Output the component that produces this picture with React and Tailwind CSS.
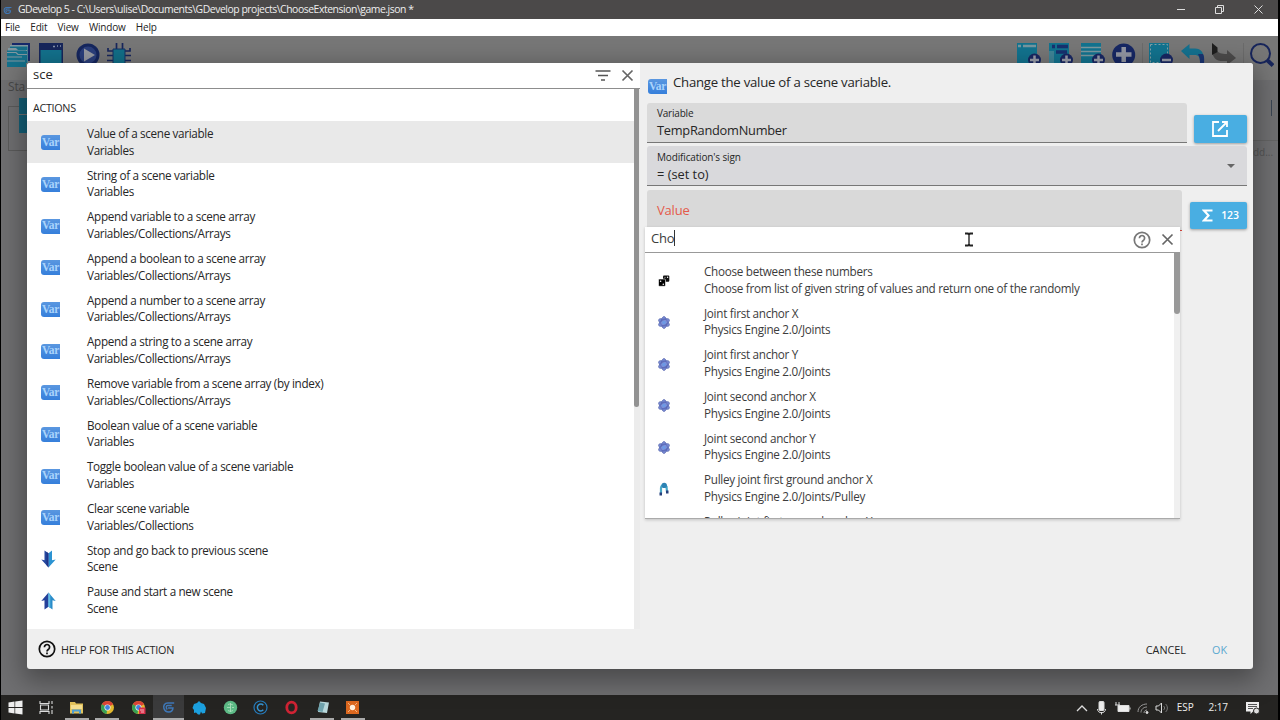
import React from 'react';

const actions = [
    { name: 'Value of a scene variable', group: 'Variables', icon: 'var' },
    { name: 'String of a scene variable', group: 'Variables', icon: 'var' },
    { name: 'Append variable to a scene array', group: 'Variables/Collections/Arrays', icon: 'var' },
    { name: 'Append a boolean to a scene array', group: 'Variables/Collections/Arrays', icon: 'var' },
    { name: 'Append a number to a scene array', group: 'Variables/Collections/Arrays', icon: 'var' },
    { name: 'Append a string to a scene array', group: 'Variables/Collections/Arrays', icon: 'var' },
    { name: 'Remove variable from a scene array (by index)', group: 'Variables/Collections/Arrays', icon: 'var' },
    { name: 'Boolean value of a scene variable', group: 'Variables', icon: 'var' },
    { name: 'Toggle boolean value of a scene variable', group: 'Variables', icon: 'var' },
    { name: 'Clear scene variable', group: 'Variables/Collections', icon: 'var' },
    { name: 'Stop and go back to previous scene', group: 'Scene', icon: 'down' },
    { name: 'Pause and start a new scene', group: 'Scene', icon: 'up' },
];

const expressions = [
    { name: 'Choose between these numbers', group: 'Choose from list of given string of values and return one of the randomly', icon: 'dice' },
    { name: 'Joint first anchor X', group: 'Physics Engine 2.0/Joints', icon: 'physics' },
    { name: 'Joint first anchor Y', group: 'Physics Engine 2.0/Joints', icon: 'physics' },
    { name: 'Joint second anchor X', group: 'Physics Engine 2.0/Joints', icon: 'physics' },
    { name: 'Joint second anchor Y', group: 'Physics Engine 2.0/Joints', icon: 'physics' },
    { name: 'Pulley joint first ground anchor X', group: 'Physics Engine 2.0/Joints/Pulley', icon: 'pulley' },
    { name: 'Pulley joint first ground anchor Y', group: '', icon: 'pulley' },
];

const VarIcon = () => (
    <span className="flex h-[15px] w-[19px] shrink-0 items-center justify-center overflow-hidden rounded-l-[3px] bg-linear-to-b from-[#5a97e0] to-[#357fdb] font-['Liberation_Serif',serif] text-[11.5px] leading-none font-bold tracking-[-0.3px] text-[#a9d3fb]">
        Var
    </span>
);

const ItemIcon = ({ type }) => {
    if (type === 'var') return <VarIcon />;
    if (type === 'down') {
        return (
            <svg width="15" height="18" viewBox="0 0 15 18">
                <path d="M3.500.500l4 2.800v14.200L.3 9.500l3.200.8z" fill="#26479f" />
                <path d="M11 .5L7.500 3.300v14.200l7.200-8-3.700.8z" fill="#2b93d2" />
                <path d="M5.500 2l2 1.300v14.200L5.500 15z" fill="#1d3488" />
            </svg>
        );
    }
    if (type === 'up') {
        return (
            <svg width="15" height="18" viewBox="0 0 15 18">
                <path d="M7.500.500v14.200L3.500 17.500V8.300L.3 9z" fill="#25409a" />
                <path d="M7.500.500v14.200l4 2.800V8.300l3.200.7z" fill="#2a8cc9" />
                <path d="M9.300 3L7.500.500v14.200L9.300 16z" fill="#5fbde6" />
            </svg>
        );
    }
    if (type === 'dice') {
        return (
            <svg width="12" height="12" viewBox="0 0 12 12">
                <rect x="5" y=".5" width="6.300" height="6.300" rx="1" fill="#111" />
                <rect x=".5" y="4" width="7" height="7.300" rx="1" fill="#000" stroke="#fff" strokeWidth=".6" />
                <circle cx="2.600" cy="6.300" r=".8" fill="#fff" />
                <circle cx="5.300" cy="9.200" r=".8" fill="#fff" />
                <circle cx="9.600" cy="2.300" r=".7" fill="#fff" />
                <circle cx="7" cy="2.300" r=".6" fill="#aaa" />
            </svg>
        );
    }
    if (type === 'physics') {
        return (
            <svg width="12" height="13" viewBox="0 0 12 13">
                <path d="M6 1.500l4.300 2.500v5L6 11.500 1.700 9V4z" fill="#8fa0dc" />
                <g fill="#7c8fd6" stroke="#5463ad" strokeWidth=".7">
                    <ellipse cx="6" cy="6.500" rx="6" ry="2.700" transform="rotate(30 6 6.500)" />
                    <ellipse cx="6" cy="6.500" rx="6" ry="2.700" transform="rotate(90 6 6.500)" />
                    <ellipse cx="6" cy="6.500" rx="6" ry="2.700" transform="rotate(150 6 6.500)" />
                </g>
                <circle cx="6" cy="6.500" r="3.600" fill="none" stroke="#5463b8" strokeWidth=".7" />
                <circle cx="6" cy="6.500" r="1.700" fill="#6c9ae6" />
            </svg>
        );
    }
    return (
        <svg width="12" height="14" viewBox="0 0 12 14">
            <path d="M3 12V6a3 3 0 0 1 5.500-1.500L9 10" fill="none" stroke="#4aa9c8" strokeWidth="2.200" />
            <circle cx="6.200" cy="3.400" r="2.700" fill="#2c83b4" />
            <path d="M1.500 10.500H4v3H1.500zM8 8.500h2.500v3H8z" fill="#273f7c" />
        </svg>
    );
};

const ListRow = ({ item, selected }) => (
    <div className={`flex h-[41.67px] shrink-0 ${selected ? 'bg-[#e9e9e9]' : ''}`}>
        <div className="flex w-[60px] items-center pt-0.5 pl-3.5">
            <ItemIcon type={item.icon} />
        </div>
        <div className="pt-1 text-[11.7px] leading-[16.6px] whitespace-nowrap">
            <div>{item.name}</div>
            <div>{item.group}</div>
        </div>
    </div>
);

const CloseIcon = () => (
    <svg width="13" height="13" viewBox="0 0 13 13" stroke="#666" strokeWidth="1.700">
        <path d="M1.500 1.500l10 10M11.500 1.500l-10 10" />
    </svg>
);

const HelpIcon = ({ color }) => (
    <svg width="18" height="18" viewBox="0 0 18 18" fill="none" stroke={color} strokeWidth="1.700">
        <circle cx="9" cy="9" r="7.700" />
        <path d="M6.400 7.200a2.600 2.600 0 1 1 4.300 1.900C9.700 9.900 9 10.200 9 11.400M9 12.500v1.700" />
    </svg>
);

const ToolIcon = ({ type }) => (
    <svg width="24" height="24" viewBox="0 0 24 24" className="shrink-0">
        {type === 'project' && (
            <>
                <path d="M5 0h18v18H5z" fill="#17296a" />
                <path d="M3 2h18v18H3z" fill="#8297a0" />
                <path d="M3 3.500h17.500V20H3z" fill="#166d88" />
                <path d="M1 5h8l2 2h9v1H1z" fill="#8297a0" />
                <path d="M0 7.500h19V24H0z" fill="#14718c" />
                <path d="M0 9.500h9l2 2h9M0 14h15M0 18h18" fill="none" stroke="#8297a0" strokeWidth="1.200" />
            </>
        )}
        {type === 'window' && (
            <>
                <path d="M0 0h24v24H0z" fill="#17265b" />
                <path d="M1.500 7h21v16h-21z" fill="#13728d" />
                <path d="M14 3.500h2M18 3h1M21 3h1" stroke="#8793aa" strokeWidth="1.500" />
            </>
        )}
        {type === 'play' && (
            <>
                <circle cx="12" cy="12" r="11.500" fill="#15265e" />
                <circle cx="12" cy="12" r="8.500" fill="#2b3f7c" />
                <path d="M8 5.500l11 6.500-11 6.500z" fill="#979aa2" />
            </>
        )}
        {type === 'debug' && (
            <>
                <path d="M9.500 0v7M15.500 0v7M1 5v3h5M23 5v3h-5M0 12.500h6M24 12.500h-6M0 17.500h6M24 17.500h-6" fill="none" stroke="#17265c" strokeWidth="1.700" />
                <path d="M6 6h12v17H6z" fill="#126f88" stroke="#173064" />
            </>
        )}
        {(type === 'event' || type === 'sub' || type === 'comment' || type === 'remove') && (
            <>
                <path d="M0 0h20v22H0z" fill="#12738f" />
                {type === 'event' && <path d="M1 3h3M6 3h13" stroke="#76969f" strokeWidth="2.500" />}
                {type === 'sub' && <path d="M0 8h5v14H0z" fill="#3f8598" />}
                {type === 'sub' && <path d="M3 3.500h3M8 3.500h11M7 9h11" stroke="#17316f" strokeWidth="3.500" />}
                {type === 'comment' && <path d="M0 4.500h20M0 8.500h20M0 12.500h17" stroke="#7c989f" strokeWidth="1.500" />}
                {type === 'remove' && <path d="M1.500 1.500h17v18h-17z" fill="none" stroke="#83a0a6" strokeDasharray="2 2" />}
                <circle cx="17.500" cy="17" r="6.500" fill="#182763" />
                <path d={type === 'remove' ? 'M13 17h9' : 'M13 17h9M17.500 12.500v9'} stroke="#9a9eaa" strokeWidth="2.500" />
            </>
        )}
        {type === 'add' && (
            <>
                <circle cx="11.700" cy="12" r="11.500" fill="#162764" />
                <path d="M4 11.500h15.500M11.700 4v15" stroke="#9296a2" strokeWidth="4.500" />
            </>
        )}
        {type === 'undo' && (
            <>
                <path d="M0 8L8.500 1v4.500H14c6 0 9 4 9 12.500h-4c0-4-2-6-5-6H8.500v4z" fill="#14718f" />
                <path d="M17 11h5c1 2 1.500 4 1 10h-4c0-3 0-7-2-10z" fill="#1b3573" />
            </>
        )}
        {type === 'redo' && (
            <>
                <path d="M0 9l5-1c2 2 4 3 10 3V7l9 8-9 7v-4H9C4 18 1 14 0 9z" fill="#4c4b4b" />
                <path d="M0 0l5.500 4.500V9L0 12z" fill="#1e1e1e" />
            </>
        )}
        {type === 'search' && (
            <>
                <circle cx="10.500" cy="10.500" r="9.500" fill="none" stroke="#17255b" strokeWidth="2" />
                <path d="M17 17l6 5.500" stroke="#17255b" strokeWidth="4" />
            </>
        )}
    </svg>
);

const GLogo = ({ size }) => (
    <svg width={size} height={size} viewBox="0 0 16 16" fill="none" stroke="#3f78b8" strokeWidth="1.800">
        <path d="M15 2.500H7C3 2.500 1.500 6 2.300 9c.8 3 3 4.500 6 4.500 3.500 0 5-2 5.200-5H7.500M12 5.500H7c-2 0-2.500 3-.5 5" />
    </svg>
);

const TaskIcon = ({ type }) => {
    if (type === 'gdevelop') return <GLogo size={13} />;
    return (
        <svg width="15" height="15" viewBox="0 0 15 15">
            {type === 'start' && <path d="M.5 2.500l6-.9v5.500h-6zM7.200 1.500L14.500.500v6.600H7.200zM.5 7.900h6v5.500l-6-.9zM7.200 7.900h7.300v6.600l-7.300-1z" fill="#eee" />}
            {type === 'tasks' && (
                <path d="M1 1v2.500h9V1M1 14v-2.500h9V14M1.500 5h8v5h-8zM13 1v3M13 6v2.500M13 10v4" fill="none" stroke="#ddd" strokeWidth="1.100" />
            )}
            {type === 'files' && (
                <>
                    <path d="M1 2h5l1 1.500h7v10H1z" fill="#e3c35c" />
                    <path d="M2 5h11v4H2z" fill="#f5df92" />
                    <path d="M3 9.500h9v4h-2v-2H5v2H3z" fill="#4d9ed4" />
                </>
            )}
            {(type === 'chrome' || type === 'chrome2') && (
                <>
                    <circle cx="7.500" cy="7.500" r="6.500" fill="#e3b92e" />
                    <path d="M7.500 7.500L1.900 4.200a6.500 6.500 0 0 1 11.200 0z" fill="#dc4437" />
                    <path d="M7.500 7.500L1.900 4.200a6.500 6.500 0 0 0 4.600 9.700z" fill="#36a155" />
                    <circle cx="7.500" cy="7.500" r="3.100" fill="#eee" />
                    <circle cx="7.500" cy="7.500" r="2.400" fill="#4383df" />
                    {type === 'chrome2' && <path d="M8 7.500h6.500V14H8z" fill="#d9304b" />}
                    {type === 'chrome2' && <path d="M9 10h4M10 12h3" stroke="#f3b5bd" />}
                </>
            )}
            {type === 'blue' && <path d="M2 4l3-1 2-2 2 2 3 1 2 4-1 5-3 .5-1-2-1 3H6l-2-2-2 .5V10L.5 8z" fill="#1ca0df" />}
            {type === 'green' && (
                <>
                    <circle cx="7.500" cy="7.500" r="6.700" fill="#5dba86" />
                    <path d="M5 4.500c2-1 4 0 5 .5M4 7.500h3.500M9 7.500h2M5 10.500c2 1 3 1 5 0M7.500 3v9" stroke="#b5e3c3" fill="none" strokeWidth=".8" />
                </>
            )}
            {type === 'c' && (
                <>
                    <circle cx="7.500" cy="7.500" r="6.500" fill="none" stroke="#257bbd" strokeWidth="1.200" />
                    <path d="M10.300 5.200a3.400 3.400 0 1 0 0 4.600" fill="none" stroke="#3594d2" strokeWidth="1.500" />
                </>
            )}
            {type === 'opera' && <ellipse cx="7.500" cy="7.500" rx="4.700" ry="5.300" fill="none" stroke="#cf2334" strokeWidth="2.800" />}
            {type === 'notes' && (
                <>
                    <path d="M5 1.500l9 1-2 10.500-9-1z" fill="#b9d8dc" />
                    <path d="M5 2.500l5 1-2.500 8.500-5-1z" fill="#6fa3ae" />
                </>
            )}
            {type === 'orange' && (
                <>
                    <path d="M1 1h13v13H1z" fill="#dc681f" />
                    <path d="M3 3l2 2M12 3l-2 2M3 12l2-2M12 12l-2-2" stroke="#f3b383" />
                    <circle cx="7.500" cy="7.500" r="2.700" fill="#fff1df" />
                </>
            )}
        </svg>
    );
};

const taskItems = [
    { type: 'start' },
    { type: 'tasks' },
    { type: 'files', open: true },
    { type: 'chrome', open: true },
    { type: 'chrome2' },
    { type: 'gdevelop', open: true, active: true },
    { type: 'blue' },
    { type: 'green' },
    { type: 'c' },
    { type: 'opera' },
    { type: 'notes', open: true },
    { type: 'orange', open: true },
];

const TitleBar = () => (
    <div className="flex h-[19px] shrink-0 items-center bg-[#4b4949] pt-px pl-0.5 text-[10.4px] text-[#eee]">
        <GLogo size={9} />
        <span className="ml-1.5 tracking-[-0.45px] whitespace-nowrap">GDevelop 5 - C:\Users\ulise\Documents\GDevelop projects\ChooseExtension\game.json *</span>
        <svg width="91" height="10" viewBox="0 0 91 10" className="mr-[15px] ml-auto" fill="none" stroke="#ddd">
            <path d="M5 4.500h8M43.500 2.500h6v6h-6zM45.500 2.500v-2h6v6h-2M82.500.500l8 8M90.500.500l-8 8" />
        </svg>
    </div>
);

const MenuBar = () => (
    <div className="flex h-[17px] shrink-0 items-center gap-[10.3px] bg-white pl-1 text-[10px] tracking-[-0.2px] text-[#222]">
        <span>File</span>
        <span>Edit</span>
        <span>View</span>
        <span>Window</span>
        <span>Help</span>
    </div>
);

const Toolbar = () => (
    <div className="flex h-[44px] shrink-0 bg-[#777] pt-[7px] pr-1 pl-1.5">
        <div className="flex gap-[7.6px]">
            <ToolIcon type="project" />
            <ToolIcon type="window" />
            <span className="-mr-[7.6px] w-[5.5px]" />
            <ToolIcon type="play" />
            <ToolIcon type="debug" />
        </div>
        <div className="ml-auto flex gap-[7.6px]">
            <ToolIcon type="event" />
            <ToolIcon type="sub" />
            <ToolIcon type="comment" />
            <ToolIcon type="add" />
            <span className="-mx-[1.6px] w-px bg-[#6b6b6b]" />
            <ToolIcon type="remove" />
            <ToolIcon type="undo" />
            <ToolIcon type="redo" />
            <span className="-mx-[1.3px] w-px bg-[#6b6b6b]" />
            <ToolIcon type="search" />
        </div>
    </div>
);

const Scene = () => (
    <div className="flex flex-1 justify-between bg-[#6f6f71] text-[12px] text-[#484848]">
        <div className="w-[27px]">
            <div className="-mt-0.5 pl-[7px] tracking-[-0.2px]">Sta</div>
            <div className="mt-[10px] ml-[7px] flex h-[45px] w-5 flex-col border-t border-b border-l border-[#5b5b5b]">
                <div className="-mt-[9px] ml-[10px] h-4 w-3 bg-[#145f77]" />
                <div className="mt-px ml-[10px] h-[18px] w-3 bg-[#145f77]" />
            </div>
        </div>
        <div className="w-[27px] pt-5">
            <div className="ml-[20px] h-4 w-px bg-[#3a4452]" />
            <div className="mt-6 ml-0.5 border-t border-[#646464] pt-1 text-[10px] text-[#555]">dd...</div>
        </div>
    </div>
);

const ActionList = () => (
    <div className="flex w-[613px] shrink-0 flex-col bg-white">
        <div className="flex h-[26px] shrink-0 items-center border-b border-[#8d8d8d] pr-1.5 pl-1.5 text-[13px]">
            <span className="-mt-0.5">sce</span>
            <svg width="16" height="11" viewBox="0 0 16 11" className="mr-2.5 ml-auto" stroke="#555" strokeWidth="1.600">
                <path d="M.5 1h15M3 5.500h10M6 10h4" />
            </svg>
            <CloseIcon />
        </div>
        <div className="flex min-h-0 flex-1">
            <div className="flex flex-1 flex-col overflow-hidden tracking-[-0.33px]">
                <div className="flex h-8 shrink-0 items-center pt-1.5 pl-1.5 text-[10.8px]">ACTIONS</div>
                {actions.map((item, index) => (
                    <ListRow key={index} item={item} selected={index === 0} />
                ))}
            </div>
            <div className="w-1.5 bg-[#ececec] pr-px">
                <div className="h-[318px] rounded-b-sm bg-[#929292]" />
            </div>
        </div>
    </div>
);

const ExpressionPopup = () => (
    <div className="absolute top-[37px] -left-0.5 z-10 flex h-[292px] w-[535px] flex-col border-b border-[#aaa] bg-white text-[#3c3c3c] shadow-[0_1px_3px_rgba(0,0,0,0.2)]">
        <div className="flex h-[26px] shrink-0 items-center border-b border-[#999] pr-1.5 pl-1.5 text-[13px]">
            <span className="-mt-1 border-r border-[#333] leading-[16px] tracking-[-0.2px]">Cho</span>
            <svg width="10" height="15" viewBox="0 0 10 15" className="mr-[159px] ml-auto" fill="none">
                <path d="M1 1.500h3l1 1 1-1h3M5 2.500v10M1 13.500h3l1-1 1 1h3" stroke="#222" strokeWidth="2" />
                <path d="M5 3v9" stroke="#aaa" strokeWidth="1" />
            </svg>
            <HelpIcon color="#777" />
            <span className="ml-2.5">
                <CloseIcon />
            </span>
        </div>
        <div className="flex min-h-0 flex-1">
            <div className="-ml-px flex flex-1 flex-col overflow-hidden pt-1.5 tracking-[-0.28px]">
                {expressions.map((item, index) => (
                    <ListRow key={index} item={item} />
                ))}
            </div>
            <div className="w-1.5 bg-[#f0f0f0]">
                <div className="h-[61px] rounded-b-sm bg-[#999]" />
            </div>
        </div>
    </div>
);

const Parameters = () => (
    <div className="flex flex-1 flex-col bg-[#efefef] pr-1.5 pl-[7px]">
        <div className="flex h-10 items-center pl-px text-[13.2px] tracking-[-0.25px]">
            <span className="mt-[7px] tracking-normal">
                <VarIcon />
            </span>
            <span className="-mt-px ml-1.5">Change the value of a scene variable.</span>
        </div>
        <div className="flex items-end justify-between">
            <div className="h-10 w-[540px] rounded-t-[3px] border-b border-[#777] bg-[#dadada] pt-0.5 pl-2.5">
                <div className="text-[10px] leading-[17px] tracking-[-0.2px]">Variable</div>
                <div className="text-[12.8px] leading-[17px] tracking-[-0.25px]">TempRandomNumber</div>
            </div>
            <button className="flex h-7 w-[53px] items-center justify-center rounded-xs bg-[#49aee2] shadow-[0_1px_3px_rgba(0,0,0,0.35)]">
                <svg width="16" height="16" viewBox="0 0 16 16" className="-mt-px mr-0.5" fill="none" stroke="#fff" strokeWidth="1.800">
                    <path d="M7 1H1v14h14V9M10 1h5v5M15 1L6 10" />
                </svg>
            </button>
        </div>
        <div className="mt-[3px] flex h-10 items-center justify-between rounded-t-[3px] border-b border-[#777] bg-[#d9d9dc] pr-3 pl-2.5">
            <div>
                <div className="text-[10px] leading-[17px] tracking-[-0.15px]">Modification&apos;s sign</div>
                <div className="text-[12.8px] leading-[17px]">= (set to)</div>
            </div>
            <div className="border-x-[4.5px] border-t-[4.5px] border-x-transparent border-t-[#666]" />
        </div>
        <div className="relative mt-1 flex items-center justify-between">
            <div className="h-[41px] w-[535px] rounded-t-[3px] border-b border-[#d5473e] bg-[#d9d9d9] pt-[11px] pl-2.5 text-[13px] tracking-[-0.2px] text-[#e45a4b]">Value</div>
            <button className="mt-2.5 flex h-[27px] w-[57px] items-center justify-center rounded-xs bg-[#49aee2] pl-1 text-[10.5px] font-semibold tracking-[-0.2px] text-white shadow-[0_1px_3px_rgba(0,0,0,0.35)]">
                <svg width="11" height="13" viewBox="0 0 11 13" className="mr-2" fill="none" stroke="#fff" strokeWidth="2.200">
                    <path d="M10.500 1.500H2l4.500 5-4.500 5h8.500" />
                </svg>
                123
            </button>
            <ExpressionPopup />
        </div>
    </div>
);

const Dialog = () => (
    <div className="absolute top-[63px] left-[26px] flex h-[606px] w-[1226px] flex-col overflow-hidden rounded-[3px] bg-[#efefef] text-[#262626] shadow-[0_8px_26px_4px_rgba(0,0,0,0.35)]">
        <div className="flex h-[566px]">
            <ActionList />
            <Parameters />
        </div>
        <div className="flex flex-1 items-center pr-[26px] pl-[11px] text-[10.8px]">
            <HelpIcon color="#111" />
            <span className="mt-0.5 ml-[5px] tracking-[-0.2px]">HELP FOR THIS ACTION</span>
            <span className="mt-0.5 ml-auto">CANCEL</span>
            <span className="mt-0.5 ml-[26px] text-[#5ba9d0]">OK</span>
        </div>
    </div>
);

const Taskbar = () => (
    <div className="flex h-[25px] shrink-0 bg-[#252422] text-[10px] text-[#eee]">
        <div className="-ml-px flex">
            {taskItems.map((item) => (
                <div key={item.type} className={`flex w-[30.7px] flex-col items-center ${item.active ? 'bg-[#3b3b3c]' : ''}`}>
                    <div className="flex h-[23px] items-center pt-px">
                        <TaskIcon type={item.type} />
                    </div>
                    {item.open && <div className={`h-0.5 bg-[#aaa] ${item.active ? 'w-full' : 'w-6'}`} />}
                </div>
            ))}
        </div>
        <div className="mr-[18px] ml-auto flex items-center tracking-[-0.1px]">
            <svg width="92" height="16" viewBox="0 0 92 16" fill="none" stroke="#ddd">
                <path d="M1 11l5-5 5 5" strokeWidth="1.300" />
                <rect x="23" y="1.500" width="5" height="9" rx="1" fill="#eee" />
                <path d="M21.500 9c0 5 8 5 8 0M25.500 12v2.500" />
                <path d="M42 5.500h11v6H42zM54 7.500v2" fill="#eee" />
                <path d="M40 2v3M43 2v3M39 5h5" />
                <path d="M62 12c0-5 4-8 9-8M65 12.500c0-3.500 3-5.500 6-5.500M68 13c0-2 1.500-3 3-3" stroke="#999" />
                <circle cx="71" cy="12.500" r="1" fill="#eee" />
                <path d="M80 6h2.500l3-3v10l-3-3H80z" />
                <path d="M87.500 6c1.500 1 1.500 3 0 4M89.500 4c2.500 2 2.500 6 0 8" stroke="#777" />
            </svg>
            <span className="ml-[9px]">ESP</span>
            <span className="ml-[15px]">2:17</span>
            <svg width="15" height="14" viewBox="0 0 15 14" className="ml-[17px]">
                <path d="M1 1h13v9.500H8L5.500 13v-2.500H1z" fill="#eee" />
                <path d="M3 3.500h9M3 5.500h9M3 7.500h5" stroke="#555" />
                <circle cx="11.500" cy="10" r="3" fill="#ddd" stroke="#252422" />
            </svg>
        </div>
    </div>
);

const App = () => {
    return (
        <div className="relative flex h-[720px] w-[1280px] flex-col overflow-hidden border-r-2 border-l border-black bg-[#6f6f71] font-['Open_Sans','Noto_Sans',sans-serif]">
            <TitleBar />
            <MenuBar />
            <Toolbar />
            <Scene />
            <Taskbar />
            <Dialog />
        </div>
    );
};

export default App;
